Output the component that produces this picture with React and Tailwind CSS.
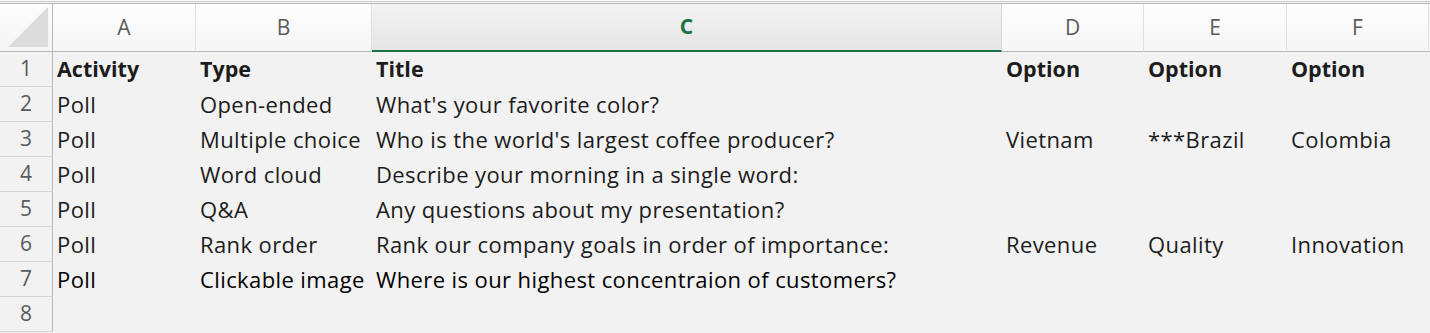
import React from "react";

const cols = [
  { key: "A", w: "w-[143px]" },
  { key: "B", w: "w-[176px]" },
  { key: "C", w: "w-[630px]" },
  { key: "D", w: "w-[142px]" },
  { key: "E", w: "w-[143px]" },
  { key: "F", w: "w-[142px]" },
];

const rows = [
  { bold: true, cells: ["Activity", "Type", "Title", "Option", "Option", "Option"] },
  { cells: ["Poll", "Open-ended", "What's your favorite color?", "", "", ""] },
  { cells: ["Poll", "Multiple choice", "Who is the world's largest coffee producer?", "Vietnam", "***Brazil", "Colombia"] },
  { cells: ["Poll", "Word cloud", "Describe your morning in a single word:", "", "", ""] },
  { cells: ["Poll", "Q&A", "Any questions about my presentation?", "", "", ""] },
  { cells: ["Poll", "Rank order", "Rank our company goals in order of importance:", "Revenue", "Quality", "Innovation"] },
  { black: true, cells: ["Poll", "Clickable image", "Where is our highest concentraion of customers?", "", "", ""] },
  { cells: ["", "", "", "", "", ""] },
];

export default function App() {
  return (
    <div
      className="w-[1430px] h-[333px] overflow-hidden bg-[#f2f2f2] text-[#1c1c1c]"
      style={{ fontFamily: '"Open Sans", "Liberation Sans", sans-serif' }}
    >
      {/* top frame lines */}
      <div className="h-[1px] bg-[#fbfbfb]" />
      <div className="h-[1px] bg-[#c9c9c9]" />
      <div className="h-[1px] bg-[#f4f4f4]" />
      <div className="h-[1px] bg-[#b9b9b9]" />

      {/* column header */}
      <div className="flex h-[48px]">
        <div className="w-[53px] h-[48px] shrink-0 box-border border-r border-b border-[#b8b8b8] bg-gradient-to-b from-[#fcfcfc] to-[#f5f5f5] flex items-end justify-end pr-[3px] pb-[3px]">
          <svg width="42" height="42" viewBox="0 0 42 42">
            <polygon points="41,1 41,41 1,41" fill="#dcdcdc" />
          </svg>
        </div>
        {cols.map((c) =>
          c.key === "C" ? (
            <div
              key={c.key}
              className={`${c.w} h-[48px] shrink-0 box-border border-r border-[#d8d8d8] border-b-2 border-b-[#1d7146] bg-gradient-to-b from-[#f3f3f3] to-[#e5e5e5] flex items-center justify-center text-[21px] font-bold text-[#1d7146]`}
            >
              C
            </div>
          ) : (
            <div
              key={c.key}
              className={`${c.w} h-[48px] shrink-0 box-border border-r border-[#e0e0e0] border-b border-b-[#b8b8b8] bg-gradient-to-b from-[#fdfdfd] to-[#f6f6f6] flex items-center justify-center text-[21px] text-[#5a5a5a]`}
            >
              {c.key}
            </div>
          )
        )}
        <div className="flex-1 h-[48px] box-border border-b border-[#b8b8b8] bg-[#f7f7f7]" />
      </div>

      {/* rows */}
      {rows.map((r, i) => (
        <div key={i} className="flex h-[35px]">
          <div className="w-[53px] h-[35px] shrink-0 box-border border-r border-[#b8b8b8] border-b border-b-[#d6d6d6] bg-[#f2f2f2] flex items-center justify-center text-[21px] text-[#5a5a5a]">
            {i + 1}
          </div>
          {cols.map((c, j) => (
            <div
              key={c.key}
              className={`${c.w} h-[35px] shrink-0 flex items-center pl-[4px] whitespace-nowrap overflow-visible ${
                r.bold ? "font-bold text-[21.5px]" : "text-[22px] tracking-[0.4px]"
              } ${r.black ? "text-black" : ""}`}
            >
              {r.cells[j]}
            </div>
          ))}
        </div>
      ))}
    </div>
  );
}
